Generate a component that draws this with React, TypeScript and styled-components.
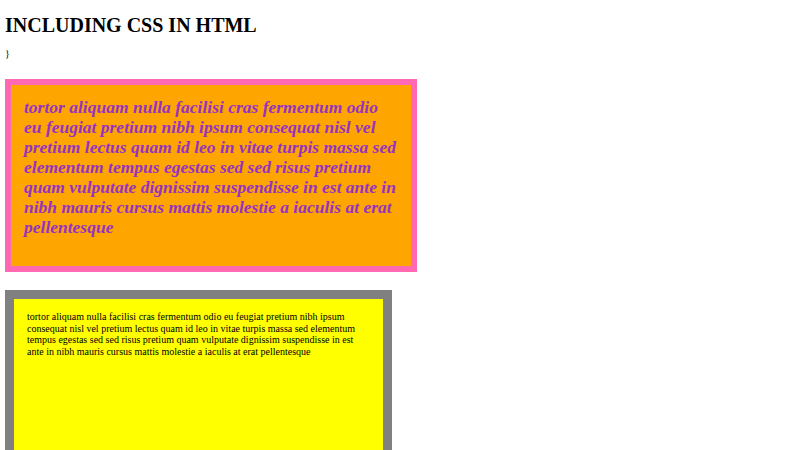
import React from "react";
import styled, { createGlobalStyle } from "styled-components";

const Global = createGlobalStyle`
  html, body { margin: 0; padding: 0; background: #ffffff; }
  body { font-family: "Liberation Serif", "Times New Roman", serif; color: #000; }
`;

const Page = styled.div`
  padding: 5px;
  display: flex;
  flex-direction: column;
  align-items: flex-start;
`;

const Title = styled.h1`
  margin: 8px 0 0 0;
  font-size: 20px;
  line-height: 24px;
  font-weight: bold;
`;

const Stray = styled.div`
  margin-top: 11px;
  font-size: 10px;
  line-height: 12px;
`;

const Box = styled.div<{ $border: string; $bg: string; $w: number; $bw: number; $mt: number }>`
  box-sizing: border-box;
  margin-top: ${(p) => p.$mt}px;
  width: ${(p) => p.$w}px;
  border: ${(p) => p.$bw}px solid ${(p) => p.$border};
  background: ${(p) => p.$bg};
`;

const FancyText = styled.p`
  margin: 0;
  padding: 12px 13px 29px 13px;
  font-size: 17.5px;
  line-height: 20px;
  font-style: italic;
  font-weight: bold;
  color: #9432c4;
`;

const PlainText = styled.p`
  margin: 0;
  padding: 12px 13px 0 13px;
  min-height: 200px;
  font-size: 10px;
  line-height: 11.5px;
  color: #000;
`;

const lorem =
  "tortor aliquam nulla facilisi cras fermentum odio eu feugiat pretium nibh ipsum consequat nisl vel pretium lectus quam id leo in vitae turpis massa sed elementum tempus egestas sed sed risus pretium quam vulputate dignissim suspendisse in est ante in nibh mauris cursus mattis molestie a iaculis at erat pellentesque";

export default function App() {
  return (
    <>
      <Global />
      <Page>
        <Title>INCLUDING CSS IN HTML</Title>
        <Stray>{"}"}</Stray>
        <Box $border="#ff69b4" $bg="#ffa500" $w={412} $bw={6} $mt={19}>
          <FancyText>{lorem}</FancyText>
        </Box>
        <Box $border="#808080" $bg="#ffff00" $w={387} $bw={9} $mt={18}>
          <PlainText>{lorem}</PlainText>
        </Box>
      </Page>
    </>
  );
}
